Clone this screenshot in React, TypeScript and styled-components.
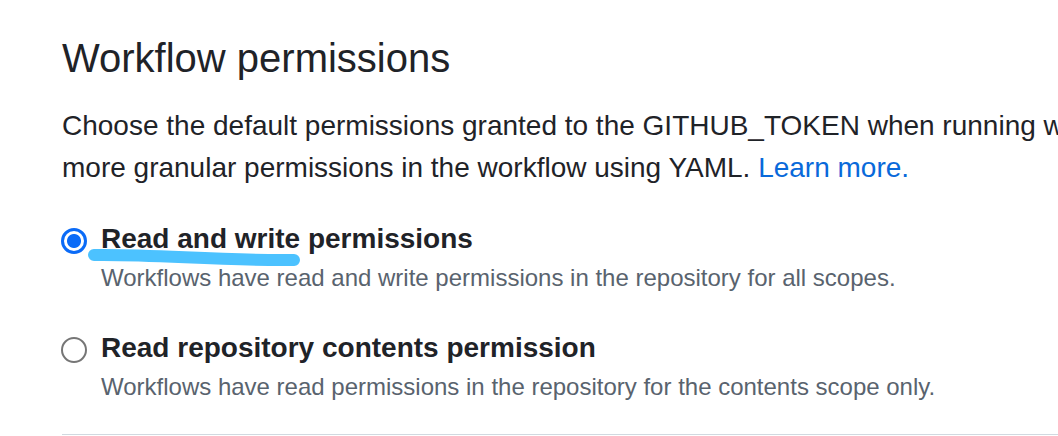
import styled, { createGlobalStyle } from "styled-components";

const GlobalStyles = createGlobalStyle`
  * {
    margin: 0;
    padding: 0;
    box-sizing: border-box;
  }

  html, body {
    background: #ffffff;
    overflow: hidden;
  }

  body {
    font-family: "Liberation Sans", Arial, sans-serif;
    color: #1f2328;
    -webkit-font-smoothing: antialiased;
  }
`;

const options = [
  {
    id: "write",
    label: "Read and write permissions",
    note: "Workflows have read and write permissions in the repository for all scopes.",
    checked: true,
  },
  {
    id: "read",
    label: "Read repository contents permission",
    note: "Workflows have read permissions in the repository for the contents scope only.",
    checked: false,
  },
];

export default function App() {
  return (
    <Page>
      <GlobalStyles />
      <Heading>Workflow permissions</Heading>
      <Intro>
        Choose the default permissions granted to the GITHUB_TOKEN when running workflows in
        this repository. You can specify
        <br />
        more granular permissions in the workflow using YAML. <Link href="#">Learn more.</Link>
      </Intro>

      <OptionList>
        {options.map((o) => (
          <Option key={o.id}>
            <Radio type="radio" name="perm" defaultChecked={o.checked} />
            <OptionText>
              <Label>{o.label}</Label>
              <Note>{o.note}</Note>
            </OptionText>
            {o.checked && (
              <Scribble viewBox="0 0 240 24" aria-hidden="true">
                <path
                  d="M7 7 C 70 6, 130 13, 207 12"
                  fill="none"
                  stroke="#4cc2ff"
                  strokeWidth="12"
                  strokeLinecap="round"
                />
              </Scribble>
            )}
          </Option>
        ))}
      </OptionList>

      <Divider />
    </Page>
  );
}

const Page = styled.div`
  padding: 33px 0 0 62px;
  width: 1058px;
  height: 436px;
  overflow: hidden;
`;

const Heading = styled.h2`
  font-size: 40px;
  font-weight: 400;
  line-height: 50px;
  color: #1f2328;
`;

const Intro = styled.p`
  margin-top: 22px;
  font-size: 28px;
  line-height: 42px;
  white-space: nowrap;
  color: #1f2328;
`;

const Link = styled.a`
  color: #0969da;
  text-decoration: none;
`;

const OptionList = styled.div`
  margin-top: 29px;
  display: flex;
  flex-direction: column;
  gap: 31px;
`;

const Option = styled.label`
  position: relative;
  display: flex;
  align-items: flex-start;
  gap: 14px;
`;

const Radio = styled.input`
  appearance: none;
  flex: none;
  width: 26px;
  height: 26px;
  margin: 10px 0 0 -1px;
  border-radius: 50%;
  border: 2px solid #767676;
  background: #ffffff;

  &:checked {
    border: 3px solid #0b6bf7;
    background: radial-gradient(circle, #0b6bf7 0 6.5px, #ffffff 7.5px);
  }
`;

const OptionText = styled.div`
  display: flex;
  flex-direction: column;
  white-space: nowrap;
`;

const Label = styled.span`
  font-size: 28px;
  font-weight: 700;
  line-height: 42px;
  color: #1f2328;
`;

const Note = styled.span`
  font-size: 24px;
  line-height: 36px;
  color: #59636e;
`;

const Scribble = styled.svg`
  position: absolute;
  left: 25px;
  top: 30px;
  width: 240px;
  height: 24px;
  pointer-events: none;
`;

const Divider = styled.div`
  margin-top: 29px;
  height: 1px;
  background: #d1d9e0;
`;
